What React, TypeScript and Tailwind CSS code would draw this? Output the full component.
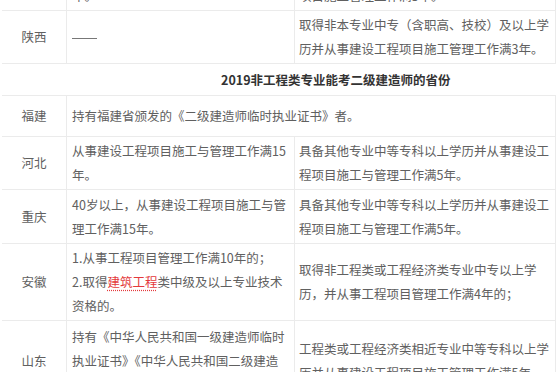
import React from "react";

type RowProps = {
  h: string;
  name: string;
  c2: React.ReactNode;
  c3?: React.ReactNode;
};

function Row({ h, name, c2, c3 }: RowProps) {
  return (
    <div className={`grid grid-cols-[64px_228px_262px] border-b border-[#ebebeb] ${h}`}>
      <div className="flex items-center justify-center">{name}</div>
      {c3 === undefined ? (
        <div className="col-span-2 flex items-center border-l border-r border-[#ebebeb] pl-[5px] pr-[5px]">
          <div>{c2}</div>
        </div>
      ) : (
        <>
          <div className="flex items-center border-l border-[#ebebeb] pl-[5px] pr-[4px]">
            <div>{c2}</div>
          </div>
          <div className="flex items-center border-l border-r border-[#ebebeb] pl-[4px] pr-[4px]">
            <div>{c3}</div>
          </div>
        </>
      )}
    </div>
  );
}

export default function App() {
  return (
    <div className="w-[558px] h-[372px] overflow-hidden bg-white font-[family-name:'Noto_Sans_CJK_SC',sans-serif] text-[12.5px]/[24px] text-[#606060]">
      <div className="ml-[2px] mt-[-43px] w-[554px]">
        <Row
          h="h-[54px]"
          name="甘肃"
          c2={<>从事建设工程项目施工管理工作满10<br />年。</>}
          c3={<>取得非本专业大专及以上学历并从事建设工程项目施工管理工作满3年。</>}
        />
        <Row
          h="h-[53px]"
          name="陕西"
          c2={<span className="inline-block w-[25px] border-t border-[#777] align-middle" />}
          c3={<>取得非本专业中专（含职高、技校）及以上学历并从事建设工程项目施工管理工作满3年。</>}
        />
        <div className="h-[32px] border-b border-[#ebebeb] flex items-center pl-[219px] font-bold text-[#333]">
          2019非工程类专业能考二级建造师的省份
        </div>
        <Row
          h="h-[41px]"
          name="福建"
          c2={<>持有福建省颁发的《二级建造师临时执业证书》者。</>}
        />
        <Row
          h="h-[53px]"
          name="河北"
          c2={<>从事建设工程项目施工与管理工作满15年。</>}
          c3={<>具备其他专业中等专科以上学历并从事建设工程项目施工与管理工作满5年。</>}
        />
        <Row
          h="h-[54px]"
          name="重庆"
          c2={<>40岁以上，从事建设工程项目施工与管理工作满15年。</>}
          c3={<>具备其他专业中等专科以上学历并从事建设工程项目施工与管理工作满5年。</>}
        />
        <Row
          h="h-[77px]"
          name="安徽"
          c2={
            <>
              1.从事工程项目管理工作满10年的；
              <br />
              2.取得
              <span className="text-[#e4393c] underline decoration-dotted decoration-[#e4393c] underline-offset-[3px]">
                建筑工程
              </span>
              类中级及以上专业技术资格的。
            </>
          }
          c3={<>取得非工程类或工程经济类专业中专以上学历，并从事工程项目管理工作满4年的；</>}
        />
        <Row
          h="h-[80px]"
          name="山东"
          c2={<>持有《中华人民共和国一级建造师临时执业证书》《中华人民共和国二级建造师临时执业证书》者。</>}
          c3={<>工程类或工程经济类相近专业中等专科以上学历并从事建设工程项目施工管理工作满5年。</>}
        />
      </div>
    </div>
  );
}
